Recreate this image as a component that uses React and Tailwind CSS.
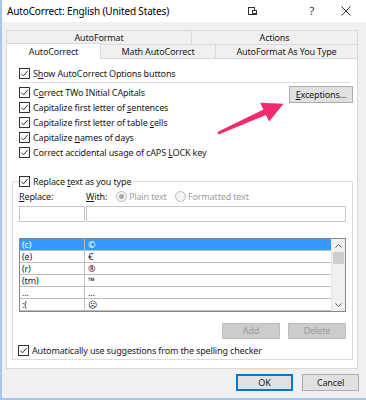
import React from 'react'

const entries = [
  ['(c)', '©'],
  ['(e)', '€'],
  ['(r)', '®'],
  ['(tm)', '™'],
  ['...', '…'],
  [':(', '☹'],
]

function CheckBox() {
  return (
    <span className="flex h-[11px] w-[11px] shrink-0 items-center justify-center border border-[#333333] bg-white">
      <svg viewBox="0 0 9 9" className="h-[9px] w-[9px]">
        <path d="M1.3 4.6 L3.5 6.9 L7.7 1.9" fill="none" stroke="#333333" strokeWidth="1" />
      </svg>
    </span>
  )
}

function Radio({ checked }) {
  return (
    <span className="flex h-[11px] w-[11px] shrink-0 items-center justify-center rounded-full border border-[#bcbcbc] bg-[#f4f4f4]">
      {checked && <span className="h-[5px] w-[5px] rounded-full bg-[#a8a8a8]" />}
    </span>
  )
}

function Option({ children }) {
  return (
    <div className="flex h-[15px] items-center gap-[3px] whitespace-nowrap">
      <CheckBox />
      <span>{children}</span>
    </div>
  )
}

function U({ children }) {
  return <span className="underline underline-offset-[1px]">{children}</span>
}

function Button({ children, disabled, primary, className = '' }) {
  let look = 'border-[#adadad] bg-[#e1e1e1] text-[#1a1a1a]'
  if (disabled) look = 'border-[#bfbfbf] bg-[#cccccc] text-[#9a9a9a]'
  if (primary) look = 'border-[#0078d7] bg-[#e1e1e1] text-[#1a1a1a] shadow-[inset_0_0_0_1px_#0078d7]'
  return (
    <div className={`flex items-center justify-center border ${look} ${className}`}>{children}</div>
  )
}

export default function App() {
  return (
    <div className="relative flex h-[400px] w-[366px] flex-col overflow-hidden border-b-2 border-l-2 border-[#a6c6ec] bg-[#f0f0f0] font-['Noto_Sans',sans-serif] text-[9px] tracking-[-0.15px] text-[#1a1a1a]">
      {/* title bar */}
      <div className="flex h-[22px] shrink-0 items-center bg-white pl-[5px]">
        <span className="text-[10px] text-black">AutoCorrect: English (United States)</span>
        <div className="ml-auto flex items-center pr-[15px]">
          <svg viewBox="0 0 9 9" className="mr-[52px] h-[9px] w-[9px]">
            <rect x="0.5" y="0.5" width="6" height="7" fill="none" stroke="#333" />
            <rect x="4" y="3" width="5" height="5" fill="#333" />
            <rect x="5" y="4" width="3" height="2" fill="#fff" />
          </svg>
          <span className="mr-[27px] text-[11px] text-[#333]">?</span>
          <svg viewBox="0 0 10 10" className="h-[10px] w-[10px]">
            <path d="M0.5 0.5 L9.5 9.5 M9.5 0.5 L0.5 9.5" stroke="#333" strokeWidth="1" />
          </svg>
        </div>
      </div>

      {/* tabs */}
      <div className="ml-[4px] mt-[8px] w-[352px]">
        <div className="flex h-[14px] leading-[14px]">
          <div className="w-[185px] border-l border-t border-[#d9d9d9] text-center">AutoFormat</div>
          <div className="flex-1 border-l border-r border-t border-[#d9d9d9] text-center">Actions</div>
        </div>
        <div className="flex h-[14px] items-end">
          <div className="relative z-10 -mb-[1px] flex h-[16px] w-[95px] items-center justify-center border-l border-r border-t border-[#d9d9d9] bg-white">
            AutoCorrect
          </div>
          <div className="flex h-[14px] w-[115px] items-center justify-center border-t border-r border-[#d9d9d9]">
            Math AutoCorrect
          </div>
          <div className="flex h-[14px] flex-1 items-center justify-center border-t border-r border-[#d9d9d9]">
            AutoFormat As You Type
          </div>
        </div>

        {/* panel */}
        <div className="flex h-[311px] flex-col border border-[#d9d9d9] bg-white pl-[5px] pr-[4px] pt-[7px]">
          <div className="pl-[7px]">
            <Option>
              S<U>h</U>ow AutoCorrect Options buttons
            </Option>
          </div>
          <div className="ml-[8px] mr-[3px] mt-[1px] h-px bg-[#dcdcdc]" />
          <div className="mt-[2px] flex pl-[7px]">
            <div className="flex flex-col">
              <Option>
                C<U>o</U>rrect TWo INitial CApitals
              </Option>
              <Option>
                Capitalize first letter of <U>s</U>entences
              </Option>
              <Option>
                Capitalize first letter of table <U>c</U>ells
              </Option>
              <Option>
                Capitalize <U>n</U>ames of days
              </Option>
              <Option>
                Correct accidental usage of cAPS <U>L</U>OCK key
              </Option>
            </div>
            <Button className="ml-auto mt-[1px] h-[17px] w-[64px]">
              <span>
                <U>E</U>xceptions...
              </span>
            </Button>
          </div>

          {/* replace group */}
          <fieldset className="mt-[14px] border border-[#dcdcdc] pb-[1px] pl-[6px] pr-[6px]">
            <legend className="pr-[2px]">
              <Option>
                Replace <U>t</U>ext as you type
              </Option>
            </legend>
            <div className="flex h-[15px] items-center whitespace-nowrap">
              <span className="w-[67px]">
                <U>R</U>eplace:
              </span>
              <span className="w-[30px]">
                <U>W</U>ith:
              </span>
              <div className="flex w-[59px] items-center gap-[2px] text-[#a0a0a0]">
                <Radio checked />
                <span>Plain text</span>
              </div>
              <div className="flex items-center gap-[2px] text-[#a0a0a0]">
                <Radio />
                <span>Formatted text</span>
              </div>
            </div>
            <div className="mt-[2px] flex h-[16px]">
              <div className="w-[66px] border border-[#c6c6c6] bg-white" />
              <div className="ml-[1px] flex-1 border border-[#c6c6c6] bg-white" />
            </div>

            {/* list */}
            <div className="mt-[16px] flex h-[74px] border border-[#828790] bg-white">
              <div className="flex flex-1 flex-col">
                {entries.map(([from, to], i) => (
                  <div
                    key={from}
                    className={`flex h-[12px] border-b border-[#bdbdbd] leading-[11px] ${
                      i === 0 ? 'bg-[#3399ff] text-white' : ''
                    }`}
                  >
                    <span className="w-[65px] border-r border-[#bdbdbd] pl-[2px]">{from}</span>
                    <span className="pl-[3px]">{to}</span>
                  </div>
                ))}
              </div>
              <div className="flex w-[14px] flex-col border-l border-[#e6e6e6] bg-[#f0f0f0]">
                <div className="flex h-[13px] items-center justify-center">
                  <svg viewBox="0 0 7 4" className="h-[4px] w-[7px]">
                    <path d="M0.5 3.5 L3.5 0.5 L6.5 3.5" fill="none" stroke="#606060" strokeWidth="1" />
                  </svg>
                </div>
                <div className="mx-[1px] h-[12px] bg-[#cdcdcd]" />
                <div className="flex-1" />
                <div className="flex h-[13px] items-center justify-center">
                  <svg viewBox="0 0 7 4" className="h-[4px] w-[7px]">
                    <path d="M0.5 0.5 L3.5 3.5 L6.5 0.5" fill="none" stroke="#606060" strokeWidth="1" />
                  </svg>
                </div>
              </div>
            </div>

            <div className="mt-[11px] flex justify-end gap-[8px]">
              <Button disabled className="h-[16px] w-[58px]">
                Add
              </Button>
              <Button disabled className="h-[16px] w-[58px]">
                Delete
              </Button>
            </div>
            <div className="-ml-px mt-[4px]">
              <Option>Automatically use suggestions from the spelling checker</Option>
            </div>
          </fieldset>
        </div>
      </div>

      {/* footer */}
      <div className="mt-[5px] flex justify-end gap-[9px] pr-[7px]">
        <Button primary className="h-[17px] w-[57px]">
          OK
        </Button>
        <Button className="h-[17px] w-[57px]">Cancel</Button>
      </div>

      {/* arrow over the panel */}
      <svg className="pointer-events-none absolute left-[-2px] top-0 h-[400px] w-[366px]" viewBox="0 0 366 400">
        <polygon
          points="217.4,132 263.5,109.5 260.2,102.8 283.5,103.8 269.2,121.6 265.9,114.9 218.6,134.4"
          fill="#f42a6c"
          strokeLinejoin="round"
        />
      </svg>
    </div>
  )
}
